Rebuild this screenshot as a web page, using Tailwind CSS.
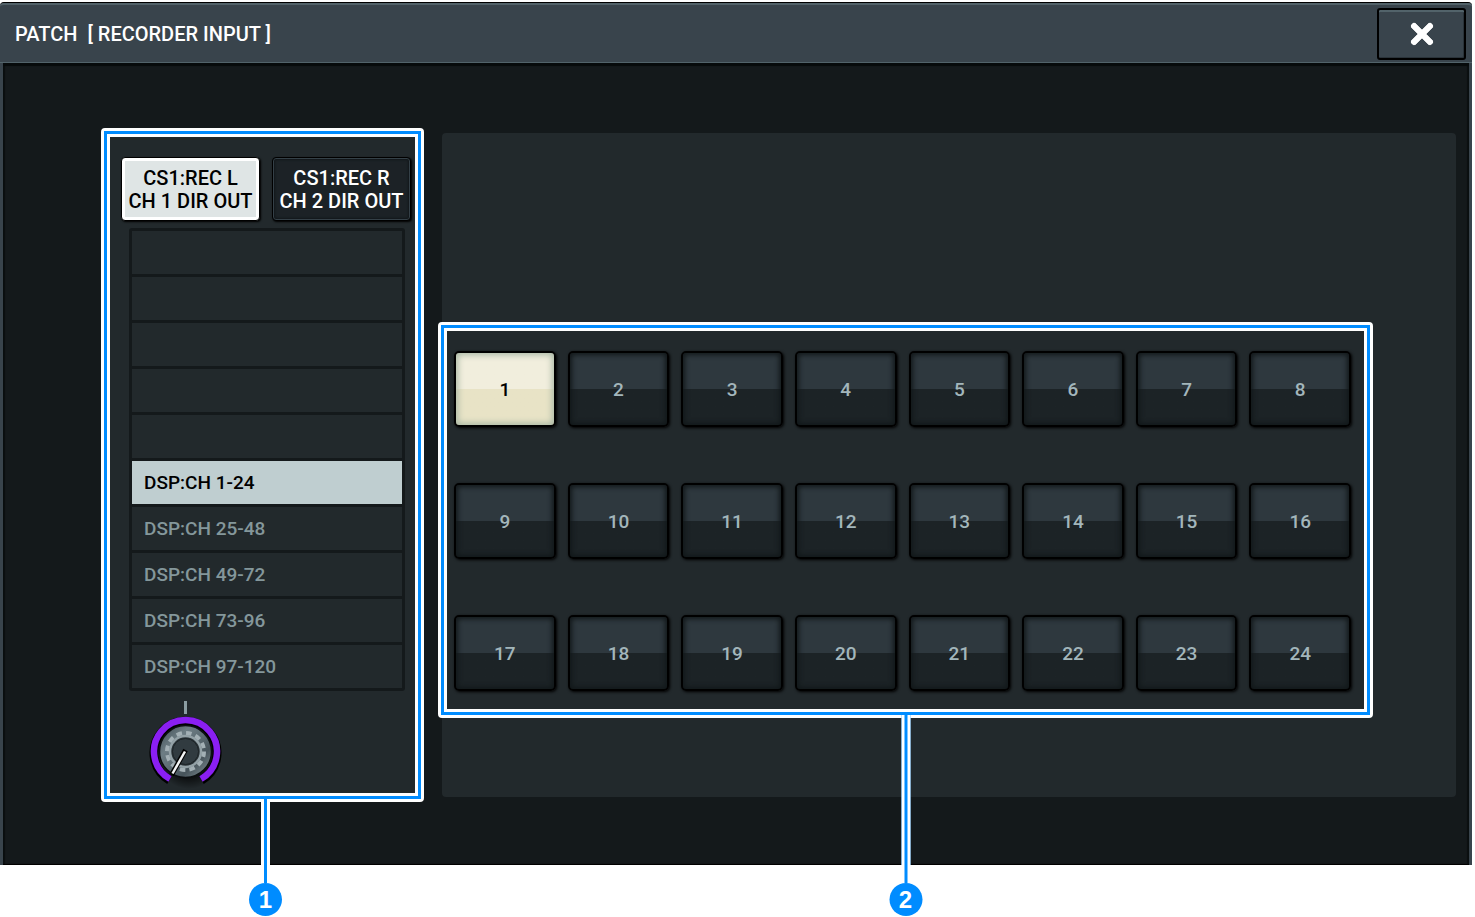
<!DOCTYPE html>
<html lang="en">
<head>
    <meta charset="UTF-8">
    <meta name="viewport" content="width=device-width, initial-scale=1.0">
    <title>Patch - Recorder Input</title>
    <script src="https://cdn.jsdelivr.net/npm/@tailwindcss/browser@4"></script>
</head>
<body class="bg-white pt-[2px] pr-[3px] pb-[52px] font-[Roboto,sans-serif] text-[20px]">

    <!-- Window -->
    <div class="bg-[#39444c] rounded-t-[4px] border-t border-black px-[3px]">

        <!-- Title bar -->
        <header class="flex items-center justify-between h-[60px] -mx-[3px] pl-[15px] pr-[6px] rounded-t-[4px] border-t-2 border-t-[#526269] border-b border-b-[#52636a]">
            <h1 class="text-white whitespace-pre font-medium">PATCH  [ RECORDER INPUT ]</h1>
            <button type="button" aria-label="Close" class="flex items-center justify-center w-[89px] h-[52px] bg-[#39444c] rounded-[3px] border-2 border-black shadow-[inset_0_2px_0_#52636a,inset_-1px_-1px_0_#2a3339]">
                <svg class="w-6 h-6" viewBox="0 0 24 24" fill="none" stroke="#fff" stroke-width="6" stroke-linejoin="round">
                    <path d="M3 3 L21 21 M21 3 L3 21"/>
                    <path d="M4 4 L20 20 M20 4 L4 20" stroke-linecap="round"/>
                </svg>
            </button>
        </header>

        <main class="flex items-start bg-[#14191b] border-b border-black shadow-[inset_0_3px_1px_#060a0b,inset_-2px_0_1px_#0b0f10,inset_2px_0_1px_#0b0f10] pt-[65px] pb-[62px] pl-[98px] pr-[13px]">

            <!-- Port selection -->
            <section class="relative shrink-0 w-[323px] border-[3px] border-white rounded-[4px]">
                <div class="border-[3px] border-[#008cff]">
                    <div class="border-[3px] border-white bg-[#22292c] pt-[20px]">
                        <div class="flex gap-[12px] pl-[11px] pr-[4px] leading-[23px] text-center whitespace-nowrap font-medium">
                            <button type="button" aria-pressed="true" class="flex-1 h-[64px] pt-[2px] bg-[#dfe5e5] text-black rounded-[4px] border border-black shadow-[inset_0_0_0_3px_#fff,1px_1px_2px_#000]">CS1:REC L<br>CH 1 DIR OUT</button>
                            <button type="button" aria-pressed="false" class="flex-1 h-[64px] pt-[2px] bg-[#1c2226] text-white rounded-[4px] border border-black shadow-[inset_0_0_0_1px_#344047,inset_0_0_2px_2px_#12171a,1px_1px_2px_#000]">CS1:REC R<br>CH 2 DIR OUT</button>
                        </div>

                        <ul class="grid gap-[3px] mt-[7px] ml-[19px] mr-[10px] p-[3px] bg-[#14191b] rounded-[3px] font-medium text-[19px] text-[#84979b]">
                            <li class="h-[43px] bg-[#22292c]"></li>
                            <li class="h-[43px] bg-[#22292c]"></li>
                            <li class="h-[43px] bg-[#22292c]"></li>
                            <li class="h-[43px] bg-[#22292c]"></li>
                            <li class="h-[43px] bg-[#22292c]"></li>
                            <li class="h-[43px]"><button type="button" class="w-full h-full pt-[2px] pl-[12px] text-left bg-[#bfced0] text-black">DSP:CH 1-24</button></li>
                            <li class="h-[43px]"><button type="button" class="w-full h-full pt-[2px] pl-[12px] text-left bg-[#22292c]">DSP:CH 25-48</button></li>
                            <li class="h-[43px]"><button type="button" class="w-full h-full pt-[2px] pl-[12px] text-left bg-[#22292c]">DSP:CH 49-72</button></li>
                            <li class="h-[43px]"><button type="button" class="w-full h-full pt-[2px] pl-[12px] text-left bg-[#22292c]">DSP:CH 73-96</button></li>
                            <li class="h-[43px]"><button type="button" class="w-full h-full pt-[2px] pl-[12px] text-left bg-[#22292c]">DSP:CH 97-120</button></li>
                        </ul>

                        <!-- Scroll knob -->
                        <label class="relative block w-[80px] ml-[35px] mt-[9px] mb-[3px]">
                            <svg class="block w-[80px] h-[90px]" viewBox="0 0 80 90" fill="none">
                                <defs>
                                    <linearGradient id="metal" x1="0" y1="0" x2="1" y2="1">
                                        <stop offset="0" stop-color="#3c494f"/>
                                        <stop offset="0.3" stop-color="#6d7d84"/>
                                        <stop offset="0.5" stop-color="#5d6c73"/>
                                        <stop offset="0.7" stop-color="#46535a"/>
                                        <stop offset="1" stop-color="#8a999f"/>
                                    </linearGradient>
                                    <radialGradient id="glow">
                                        <stop offset="0.6" stop-color="#000" stop-opacity="0.7"/>
                                        <stop offset="1" stop-color="#000" stop-opacity="0"/>
                                    </radialGradient>
                                </defs>
                                <rect x="39" y="1" width="3" height="13" fill="#8b9da2"/>
                                <circle cx="44" cy="57" r="32" fill="url(#glow)"/>
                                <path d="M24.500 80 A31.500 31.500 0 1 1 56.500 80" stroke="#000" stroke-width="9"/>
                                <path d="M25 79 A31.500 31.500 0 1 1 56 79" stroke="#8a1ff2" stroke-width="6.500"/>
                                <circle cx="40.500" cy="51.500" r="26" fill="url(#metal)" stroke="#0b0e10" stroke-width="1.500"/>
                                <circle cx="40.500" cy="51.500" r="18.500" stroke="#a3b0b5" stroke-width="4" stroke-dasharray="5.500 4.190"/>
                                <circle cx="40.500" cy="51.500" r="15.500" fill="#2b3439" stroke="#93a1a6" stroke-width="2.500"/>
                                <circle cx="40.500" cy="51.500" r="13" fill="#313b40" stroke="#1d2427"/>
                                <path d="M40.500 50 L26.500 75" stroke="#000" stroke-width="5"/>
                                <path d="M40 51.500 L27.500 73.500" stroke="#f3f5f5" stroke-width="2.500"/>
                            </svg>
                            <input type="range" aria-label="Scroll port list" class="absolute inset-0 w-full h-full opacity-0">
                        </label>
                    </div>
                </div>

                <!-- Callout 1 -->
                <div class="absolute left-[145px] top-full w-[33px] flex flex-col items-center">
                    <div class="w-[9px] h-[66px] border-x-[3px] border-white bg-[#008cff]"></div>
                    <div class="w-[3px] h-[18px] bg-[#008cff]"></div>
                    <div class="w-[33px] h-[33px] rounded-full bg-[#008cff] text-white text-[24px] leading-[33px] font-bold text-center font-['Liberation_Sans',sans-serif]">1</div>
                </div>
            </section>

            <!-- Channel selection -->
            <div class="flex-1 ml-[18px] mt-[5px] bg-[#22292c] rounded-[4px] pt-[189px] pr-[83px] pb-[79px]">
                <section class="relative -ml-[4px] border-[3px] border-white rounded-[4px]">
                    <div class="border-[3px] border-[#008cff]">
                        <div id="channels" class="border-[3px] border-white bg-[#22292c] grid grid-cols-8 gap-x-[12px] gap-y-[56px] pt-[20px] pb-[18px] pl-[7px] pr-[13px]"></div>
                    </div>

                    <!-- Callout 2 -->
                    <div class="absolute left-1/2 -translate-x-1/2 top-full w-[33px] flex flex-col items-center">
                        <div class="w-[9px] h-[150px] border-x-[3px] border-white bg-[#008cff]"></div>
                        <div class="w-[3px] h-[18px] bg-[#008cff]"></div>
                        <div class="w-[33px] h-[33px] rounded-full bg-[#008cff] text-white text-[24px] leading-[33px] font-bold text-center font-['Liberation_Sans',sans-serif]">2</div>
                    </div>
                </section>
            </div>
        </main>
    </div>

    <script>
        const base = "h-[76px] pt-[2px] rounded-[5px] border-2 border-black text-[19px] font-medium ";
        const on = "bg-linear-to-b from-[#f1eedd] from-50% to-[#e8e3c6] to-50% text-black shadow-[inset_0_0_6px_2px_#a9b8a5,1px_1px_3px_#000]";
        const off = "bg-linear-to-b from-[#2e383e] from-50% to-[#1c2326] to-50% text-[#a3b6bb] shadow-[inset_0_0_5px_2px_#12181a,1px_1px_3px_#000]";

        const channels = document.getElementById("channels");
        for (let i = 1; i <= 24; i++) {
            const button = document.createElement("button");
            button.type = "button";
            button.textContent = i;
            button.className = base + (i === 1 ? on : off);
            channels.appendChild(button);
        }
    </script>
</body>
</html>
